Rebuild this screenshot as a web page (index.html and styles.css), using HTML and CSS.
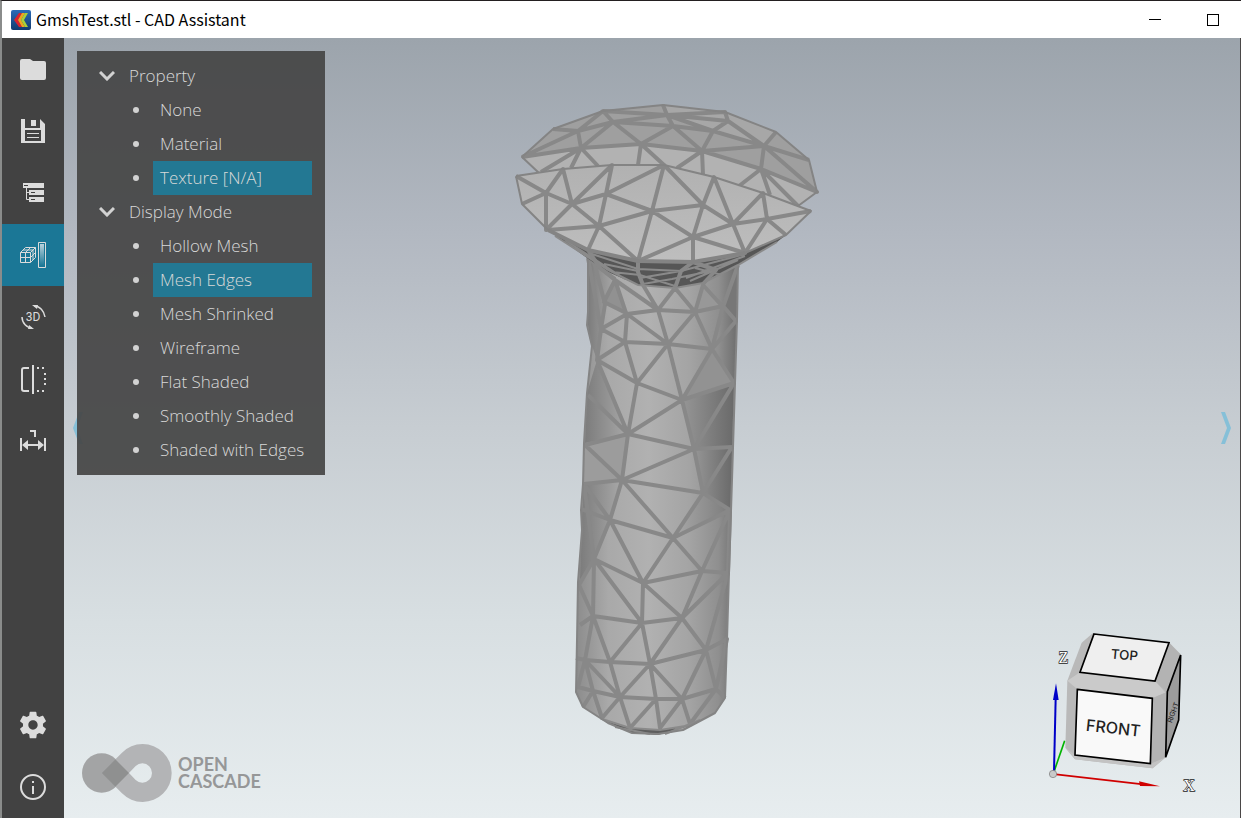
FILE: index.html
```html
<!DOCTYPE html>
<html lang="en">
<head>
  <meta charset="UTF-8" />
  <meta name="viewport" content="width=device-width, initial-scale=1.0"/>
  <title>GmshTest.stl - CAD Assistant</title>
  <link rel="stylesheet" href="styles.css">
</head>
<body>

<div class="window">
  <header class="titlebar">
    <svg class="app-icon" viewBox="0 0 20 20">
      <defs>
        <linearGradient id="appBg" x1="0" y1="0" x2="0" y2="1">
          <stop offset="0" stop-color="#2a6cb8"/>
          <stop offset="1" stop-color="#123a6e"/>
        </linearGradient>
      </defs>
      <rect width="20" height="20" rx="2" fill="url(#appBg)"/>
      <path d="M8 3h3L7 10l4 7H8L3 10z" fill="#d8222f"/>
      <path d="M11 3h3l-4 7 4 7h-3l-4-7z" fill="#f0a51e"/>
      <path d="M14 3h3l-4 7 4 7h-3l-4-7z" fill="#a9cf38"/>
    </svg>
    <h1 class="title">GmshTest.stl - CAD Assistant</h1>
    <div class="window-buttons">
      <button type="button" class="win-btn" aria-label="Minimize"><span class="win-min"></span></button>
      <button type="button" class="win-btn" aria-label="Maximize"><span class="win-max"></span></button>
    </div>
  </header>

  <div class="workspace">
    <nav class="sidebar">
      <button type="button" class="tool" aria-label="Open">
        <svg class="icon" viewBox="0 0 32 32"><path class="fill" d="M5 6h8l3 2h11a2 2 0 0 1 2 2v15a2 2 0 0 1-2 2H5a2 2 0 0 1-2-2V8a2 2 0 0 1 2-2z"/></svg>
      </button>
      <button type="button" class="tool" aria-label="Save">
        <svg class="icon" viewBox="0 0 32 32">
          <path class="fill" fill-rule="evenodd" d="M4 4h4v9h15V4l5 5v19H4zM8 15v11h16V15z"/>
          <path class="fill" d="M14 5h5v6h-5z"/>
          <path class="fill" d="M10 18h12v1H10zM10 22h12v1H10z"/>
        </svg>
      </button>
      <button type="button" class="tool" aria-label="Model tree">
        <svg class="icon" viewBox="0 0 32 32">
          <path class="fill" fill-rule="evenodd" d="M6 6h21v5H6zM7 8v1h4V8zM12 13h15v5H12zM14 15v1h4v-1zM12 20h15v5H12zM14 22v1h4v-1z"/>
          <path class="line" d="M9.500 11v11.500H12M9.500 15.500H12"/>
        </svg>
      </button>
      <button type="button" class="tool active" aria-label="Display mode">
        <svg class="icon" viewBox="0 0 32 32">
          <defs>
            <linearGradient id="scaleBar" x1="0" y1="0" x2="0" y2="1">
              <stop offset="0" stop-color="#b9d2dc"/>
              <stop offset="1" stop-color="#1b7796"/>
            </linearGradient>
          </defs>
          <path class="line" d="M3.500 13.500h10v10h-10zM3.500 18.500h10M8.500 13.500v10M3.500 13.500l5-5h10l-5 5M8.500 13.500l5-5M6 11h10M18.500 8.500v10l-5 5M13.500 18.500l5-5M16 11v10"/>
          <path class="line" d="M21.500 3.500h7v25h-7z"/>
          <path d="M23 5h4v22h-4z" fill="url(#scaleBar)"/>
        </svg>
      </button>
      <button type="button" class="tool" aria-label="3D rotation">
        <svg class="icon" viewBox="0 0 32 32">
          <path class="curve" d="M17 5c6 0 10 5 11 11M5 16c0 6 5 11 10 11"/>
          <path class="fill" d="M15 4l6 0-1 4zM17 28l-6 0 1-4z"/>
          <text class="icon-text" x="16" y="20">3D</text>
        </svg>
      </button>
      <button type="button" class="tool" aria-label="Section">
        <svg class="icon" viewBox="0 0 32 32">
          <path class="bold" d="M12 5H7q-2 0-2 2v19q0 2 2 2h5M16 2v29"/>
          <path class="bold" stroke-dasharray="2 3" d="M20 5h9M28 10v15M20 28h9"/>
        </svg>
      </button>
      <button type="button" class="tool" aria-label="Measure">
        <svg class="icon" viewBox="0 0 32 32">
          <path class="bold" d="M4 13v13M28 13v13M8 20h16M13 6h5v6"/>
          <path class="fill" d="M5 20l6-5v10zM27 20l-6-5v10z"/>
        </svg>
      </button>
      <button type="button" class="tool push-down" aria-label="Settings">
        <svg class="icon" viewBox="0 0 24 24"><path class="fill" d="M19.430 12.980c.04-.32.07-.64.07-.98s-.03-.66-.07-.98l2.110-1.650c.19-.15.24-.42.12-.64l-2-3.460c-.12-.22-.39-.3-.61-.22l-2.490 1c-.52-.4-1.080-.73-1.690-.98l-.38-2.650C14.460 2.180 14.250 2 14 2h-4c-.25 0-.46.18-.49.42l-.38 2.650c-.61.25-1.170.59-1.690.98l-2.490-1c-.23-.09-.49 0-.61.22l-2 3.460c-.13.22-.07.49.12.64l2.110 1.650c-.04.32-.07.65-.07.98s.03.66.07.98l-2.110 1.650c-.19.15-.24.42-.12.64l2 3.460c.12.22.39.3.61.22l2.490-1c.52.4 1.080.73 1.690.98l.38 2.650c.03.24.24.42.49.42h4c.25 0 .46-.18.49-.42l.38-2.650c.61-.25 1.170-.59 1.690-.98l2.490 1c.23.09.49 0 .61-.22l2-3.460c.12-.22.07-.49-.12-.64l-2.110-1.650zM12 15.500c-1.930 0-3.500-1.570-3.500-3.500s1.570-3.500 3.500-3.500 3.500 1.570 3.500 3.500-1.570 3.500-3.500 3.500z"/></svg>
      </button>
      <button type="button" class="tool" aria-label="About">
        <svg class="icon" viewBox="0 0 32 32"><circle class="bold" cx="16" cy="16" r="12"/><path class="fill" d="M15 10h2v2h-2zM15 15h2v8h-2z"/></svg>
      </button>
    </nav>

    <main class="viewport">
      <svg class="scene" viewBox="64 38 1176 780">
        <defs>
          <linearGradient id="shaft" x1="0" y1="0" x2="1" y2="0">
            <stop offset="0" stop-color="#8c8c8c"/>
            <stop offset=".2" stop-color="#a9a9a9"/>
            <stop offset=".45" stop-color="#b1b1b1"/>
            <stop offset=".7" stop-color="#a4a4a4"/>
            <stop offset=".88" stop-color="#8f8f8f"/>
            <stop offset="1" stop-color="#6c6c6c"/>
          </linearGradient>
          <linearGradient id="shadeRight" x1="0" y1="0" x2="1" y2="0">
            <stop offset="0" stop-color="#969696"/>
            <stop offset="1" stop-color="#6a6a6a"/>
          </linearGradient>
          <linearGradient id="fadeRight" x1="0" y1="0" x2="1" y2="0">
            <stop offset="0" stop-color="#a9a9a9"/>
            <stop offset="1" stop-color="#7c7c7c"/>
          </linearGradient>
          <linearGradient id="shadeLeft" x1="0" y1="0" x2="1" y2="0">
            <stop offset="0" stop-color="#7c7c7c"/>
            <stop offset="1" stop-color="#a8a8a8"/>
          </linearGradient>
          <linearGradient id="disc" x1="0" y1="0" x2="0" y2="1">
            <stop offset="0" stop-color="#b1b1b1"/>
            <stop offset="1" stop-color="#bebebe"/>
          </linearGradient>
        </defs>

        <!-- shaft -->
        <path fill="url(#shaft)" d="M588 256V312L587 325 592 346 587 393 584 443 583 484 581 510 582 530 578 582 577 640 576 692 583 707 608 723 632 733 658 734 683 730 715 713 725 698 727 640 729 573 732 480 735 383 737 320 738 262z"/>
        <path fill="url(#shadeLeft)" d="M588 258L615 280 604 302 601 329 597 360 590 340 588 325z"/>
        <path fill="#919191" d="M615 280L626 313 605 303z"/>
        <path fill="url(#shadeLeft)" d="M597 360L628 434 585 443 587 393z"/>
        <path fill="#9c9c9c" d="M585 445L628 434 622 480 584 482z"/>
        <path fill="url(#shadeLeft)" d="M584 484L622 480 610 520 594 559 580 580 582 517z"/>
        <path fill="#929292" d="M712 349L734 383 732 447 694 449 682 400z"/>
        <path fill="url(#shadeRight)" d="M682 400L734 383 732 447 694 449z"/>
        <path fill="url(#shadeRight)" d="M694 449L732 447 730 510 703 493z"/>
        <path fill="#777" d="M723 305L738 265 736 321z"/>
        <path fill="url(#fadeRight)" d="M703 493L730 510 673 538z"/>
        <path fill="#989898" d="M703 285L723 307 695 312z"/>
        <path class="edge" d="M588 258L615 280 604 302 626 313 615 280 658 310 643 285M658 310L675 288 695 312 703 285 723 307 738 265M594 262L605 304M588 258L601 329M605 304L601 329 627 314 658 310 695 312 723 306 736 321 712 349 734 383M627 314L625 342 601 329 597 360 625 342 668 344 627 314M658 310L668 344 695 312 712 349 723 306M668 344L712 349 682 400 668 344 637 383 625 342M637 383L597 360 628 434 637 383 682 400 628 434 694 449 682 400 734 383 694 449 732 447M588 395L628 434 585 445 622 480 628 434M694 449L622 480 703 493 694 449M732 447L703 493 730 510 673 538 703 493M622 480L584 484 610 520 622 480 673 538 610 520 581 509M610 520L594 559M610 520L643 583 673 538 702 571 643 583 594 559M584 484L594 559 579 585 593 616 594 559 642 623 643 583 682 618 702 571 728 573 730 510 702 571M728 573L682 618 642 623 593 616 580 625M593 616L585 660 578 687 593 691 585 660 620 697 610 662 593 616M642 623L610 662M585 660L610 662 650 664M642 623L650 664 682 618 706 650 728 573M650 664L620 697 593 691 602 718 620 697 630 728 656 699 650 664 682 699 706 650 650 664M576 658L585 660M706 650L727 639 716 689 706 650M716 689L682 699 656 699 620 697M656 699L660 728 682 699 690 724 716 689 725 698M593 691L583 707"/>
        <path fill="#5e5e5e" d="M605 721L630 728 660 730 692 725 658 735 632 733z"/>
        <path class="thin" d="M602 719L630 728 660 730 692 725M615 727L650 734M665 734L700 720"/>
        <path class="rim" d="M588 256V312L587 325 592 346 587 393 584 443 583 484 581 510 582 530 578 582 577 640 576 692 583 707 608 723 632 733 658 734 683 730 715 713 725 698 727 640 729 573 732 480 735 383 737 320 738 262"/>

        <!-- underside of the head -->
        <path fill="#565656" d="M548 230L588 250 638 261 693 262 745 253 786 235 777 242 738 265 703 283 675 288 638 285 608 272 587 258z"/>
        <path class="thin" d="M555 236L608 270 638 285 675 288 703 283 738 265 777 242M565 240L625 279M588 250L600 268M592 254L638 269 681 271M604 264L638 271M612 272L640 275 675 286M640 278L681 271M643 284L672 279 716 270M681 271L745 254M686 278L745 256M690 281L738 260M695 268L722 275"/>
        <path class="edge" d="M588 250L600 268 615 279M638 261L638 272 643 285M693 262L681 271 675 288M693 262L716 270 703 284"/>

        <!-- rear half of the head -->
        <path fill="#b2b2b2" d="M522 157L553 129 603 111 663 105 725 112 776 132 809 160 817 192 798 206 760 200 539 173z"/>
        <path fill="#9f9f9f" d="M522 157L553 129 603 111 663 105 725 112 776 132 809 160 817 192 761 169 702 151 641 144 581 148z"/>
        <path fill="#a7a7a7" d="M663 105L725 112 776 132 764 146 713 131 667 115z"/>
        <path class="edge" d="M522 157L578 131 553 129M522 157L581 148 578 131 603 111 613 122 578 131M581 148L613 122 641 144 581 148M613 122L667 115 603 111M663 105L667 115 673 126 613 122M667 115L725 112 728 121 667 115 713 131 673 126 641 144M641 144L702 151 673 126M728 121L713 131 702 151 764 146 713 131M728 121L764 146 776 132M764 146L809 160M764 146L817 192 761 169 764 146M702 151L761 169 798 206M761 169L770 195M761 169L739 186M702 151L703 175M702 151L677 168M641 144L638 165M641 144L664 165M581 148L541 172M581 148L571 168M581 148L598 166"/>
        <path class="rim" d="M539 173L522 157 553 129 603 111 663 105 725 112 776 132 809 160 817 192 798 206"/>

        <!-- front half of the head -->
        <path fill="url(#disc)" d="M516 176L563 169 612 165 664 165 714 177 763 193 811 211 786 235 745 253 693 262 638 261 588 250 548 230 522 204z"/>
        <path class="edge" d="M516 176L546 193 522 204M546 193L563 169 572 204 546 193 546 230 572 204 612 165 606 194 572 204 599 226 606 194 664 165 652 211 606 194M664 165L703 205 652 211 599 226 548 230M599 226L638 261 652 211 693 237 703 205 714 177 733 224 703 205M599 226L588 250M693 237L733 224 763 193 767 219 733 224 745 253 693 237 693 262M693 237L638 261M767 219L811 211M767 219L786 235M767 219L745 253"/>
        <path class="rim thick" d="M548 230L588 250 638 261 693 262 745 253"/>
        <path class="rim" d="M516 176L563 169 612 165 664 165 714 177 763 193 811 211 786 235 745 253M548 230L522 204 516 176"/>
      </svg>

      <button type="button" class="page-btn prev" aria-label="Previous"><svg viewBox="0 0 10 32"><path d="M6 0h4L4 16l6 16H6L0 16z"/></svg></button>
      <button type="button" class="page-btn next" aria-label="Next"><svg viewBox="0 0 10 32"><path d="M0 0h4l6 16L4 32H0l6-16z"/></svg></button>

      <section class="panel">
        <button type="button" class="group"><svg class="chevron" viewBox="0 0 16 10"><path d="M1 1l7 7 7-7"/></svg>Property</button>
        <ul class="options">
          <li><button type="button" class="option">None</button></li>
          <li><button type="button" class="option">Material</button></li>
          <li><button type="button" class="option selected">Texture [N/A]</button></li>
        </ul>
        <button type="button" class="group"><svg class="chevron" viewBox="0 0 16 10"><path d="M1 1l7 7 7-7"/></svg>Display Mode</button>
        <ul class="options">
          <li><button type="button" class="option">Hollow Mesh</button></li>
          <li><button type="button" class="option selected">Mesh Edges</button></li>
          <li><button type="button" class="option">Mesh Shrinked</button></li>
          <li><button type="button" class="option">Wireframe</button></li>
          <li><button type="button" class="option">Flat Shaded</button></li>
          <li><button type="button" class="option">Smoothly Shaded</button></li>
          <li><button type="button" class="option">Shaded with Edges</button></li>
        </ul>
      </section>

      <div class="brand">
        <svg class="brand-mark" viewBox="246 162 270 174">
          <circle cx="305" cy="249" r="59" fill="#a3a4a5"/>
          <path fill="#b3b4b6" fill-rule="evenodd" d="M305 249L366 188A87 87 0 1 1 366 310zM387 249L407 270A29 29 0 1 0 407 228z"/>
          <path fill="#8f9090" d="M305 249L346 208 387 249 346 290z"/>
        </svg>
        <div class="brand-name">OPEN<br>CASCADE</div>
      </div>

      <svg class="view-cube" viewBox="0 0 630 594">
        <path d="M72 455L104 362" stroke="#00b400" stroke-width="5"/>
        <path fill="#b9b9b9" d="M188 40L155 68 112 182 106 383 135 418 368 445 407 412 446 303 452 103 418 68z"/>
        <path fill="#cacaca" d="M150 157L112 182 142 208 367 235 407 218 375 183z"/>
        <path fill="#c3c3c3" d="M106 383L135 405 361 431 407 412 368 445 135 418z"/>
        <path fill="#b3b3b3" d="M367 235L412 215 407 412 361 431z"/>
        <path fill="#b3b3b3" d="M417 68L452 105 412 215 375 183z"/>
        <path class="face" fill="#efefef" d="M192 42L417 68 375 183 150 157z"/>
        <path class="face" fill="#f9f9f9" d="M142 208L367 235 361 431 135 405z"/>
        <path class="face" fill="#9c9c9c" d="M452 105L412 215 407 412 446 300z"/>
        <text class="cube-top" x="282" y="119" transform="rotate(5 282 119)">TOP</text>
        <text class="cube-front" x="248" y="341" transform="rotate(6 248 341)">FRONT</text>
        <text class="cube-side" x="436" y="280" transform="rotate(-70 436 280)">RIGHT</text>
        <path d="M72 455L77 235" stroke="#0000c8" stroke-width="6"/>
        <path d="M78 190L86 240H69z" fill="#0000c8"/>
        <path d="M78 463L340 493" stroke="#d00000" stroke-width="5"/>
        <path d="M327 484L390 499 330 498z" fill="#d00000"/>
        <circle cx="69" cy="462" r="11" fill="#c9c9c9" stroke="#777" stroke-width="2"/>
        <text class="axis" x="100" y="130">Z</text>
        <text class="axis" x="477" y="512">X</text>
      </svg>
    </main>
  </div>
</div>

</body>
</html>
```
FILE: styles.css
```css
* { box-sizing: border-box; }

body {
  margin: 0;
  font-family: "Open Sans", "Noto Sans", sans-serif;
}

button {
  border: none;
  padding: 0;
  background: none;
  color: inherit;
  font: inherit;
  cursor: pointer;
}

.window {
  display: flex;
  flex-direction: column;
  height: 100vh;
  border-top: 1px solid #231f20;
  border-left: 2px solid #8a8c8b;
}

.titlebar {
  display: flex;
  align-items: center;
  height: 37px;
  padding-left: 9px;
  background: #fff;
}

.app-icon {
  width: 20px;
  height: 20px;
}

.title {
  flex: 1;
  margin: 0 0 0 5px;
  padding-bottom: 2px;
  font-family: "Noto Sans CJK SC", sans-serif;
  font-size: 16px;
  font-weight: normal;
  line-height: 20px;
  color: #000;
}

.window-buttons {
  display: flex;
  gap: 2px;
}

.win-btn {
  display: flex;
  align-items: center;
  justify-content: center;
  width: 56px;
  height: 36px;
}

.win-min {
  width: 12px;
  height: 1px;
  background: #000;
}

.win-max {
  width: 12px;
  height: 12px;
  border: 1px solid #000;
}

.workspace {
  display: flex;
  flex: 1;
  min-height: 0;
}

.sidebar {
  display: flex;
  flex-direction: column;
  width: 62px;
  background: #424242;
}

.tool {
  display: flex;
  align-items: center;
  justify-content: center;
  height: 62px;
}

.tool.active {
  background: #1b7796;
}

.push-down {
  margin-top: auto;
}

.icon {
  width: 32px;
  height: 32px;
}

.icon .fill { fill: #dcdcdc; }

.icon .line {
  fill: none;
  stroke: #dcdcdc;
  stroke-width: 1;
}

.icon .curve {
  fill: none;
  stroke: #dcdcdc;
  stroke-width: 1.5;
}

.icon .bold {
  fill: none;
  stroke: #dcdcdc;
  stroke-width: 2;
}

.icon-text {
  font-family: Roboto, sans-serif;
  font-size: 12px;
  fill: #dcdcdc;
  text-anchor: middle;
}

.viewport {
  position: relative;
  flex: 1;
  min-width: 0;
  overflow: hidden;
  border-right: 1px solid #4a4747;
  background: linear-gradient(#9ca4ac, #b2b8c1 25%, #c7cdd2 50%, #d8dfe2 75%, #e7edef);
}

.scene {
  display: block;
  width: 100%;
  height: 100%;
}

.scene .edge {
  fill: none;
  stroke: #888;
  stroke-width: 4;
  stroke-linejoin: round;
}

.scene .thin {
  fill: none;
  stroke: #8a8a8a;
  stroke-width: 2;
}

.scene .rim {
  fill: none;
  stroke: #848484;
  stroke-width: 2;
  stroke-linejoin: round;
}

.scene .rim.thick { stroke-width: 4; }

.page-btn {
  position: absolute;
  top: 50%;
  width: 10px;
  height: 32px;
  margin-top: -16px;
}

.page-btn svg {
  display: block;
  width: 10px;
  height: 32px;
  fill: #86c0d8;
}

.prev { left: 9px; }
.next { right: 9px; }

.panel {
  position: absolute;
  top: 13px;
  left: 13px;
  width: 248px;
  padding: 8px 13px 8px 22px;
  background: rgba(70, 70, 70, 0.93);
  color: #d8d8d8;
  font-size: 17px;
  font-weight: 350;
  line-height: 34px;
}

.group {
  display: flex;
  align-items: center;
  gap: 14px;
  width: 100%;
}

.chevron {
  width: 16px;
  height: 10px;
  fill: none;
  stroke: #d2d2d2;
  stroke-width: 3;
}

.options {
  margin: 0;
  padding: 0 0 0 34px;
  list-style: none;
}

.options li {
  display: flex;
  align-items: center;
  gap: 14px;
}

.options li::before {
  content: "";
  width: 6px;
  height: 6px;
  border-radius: 50%;
  background: #d2d2d2;
}

.option {
  flex: 1;
  padding-left: 7px;
  text-align: left;
  white-space: nowrap;
}

.option.selected {
  background: #237893;
}

.brand {
  position: absolute;
  left: 18px;
  bottom: 16px;
  display: flex;
  align-items: center;
  gap: 6px;
}

.brand-mark {
  width: 90px;
  height: 58px;
}

.brand-name {
  font-family: Lato, sans-serif;
  font-size: 18px;
  font-weight: bold;
  line-height: 17px;
  color: #969798;
}

.view-cube {
  position: absolute;
  right: 0;
  bottom: 0;
  width: 210px;
  height: 198px;
}

.face {
  stroke: #000;
  stroke-width: 5;
}

.cube-top,
.cube-front,
.cube-side,
.axis {
  font-family: Inter, "Liberation Sans", sans-serif;
  text-anchor: middle;
  fill: #222;
}

.cube-top {
  font-size: 40px;
  font-weight: 500;
}

.cube-front {
  font-size: 48px;
  font-weight: 500;
}

.cube-side { font-size: 21px; }

.axis {
  font-family: "Liberation Serif", serif;
  font-size: 48px;
  fill: #fff;
  stroke: #222;
  stroke-width: 4px;
  paint-order: stroke;
}
```
